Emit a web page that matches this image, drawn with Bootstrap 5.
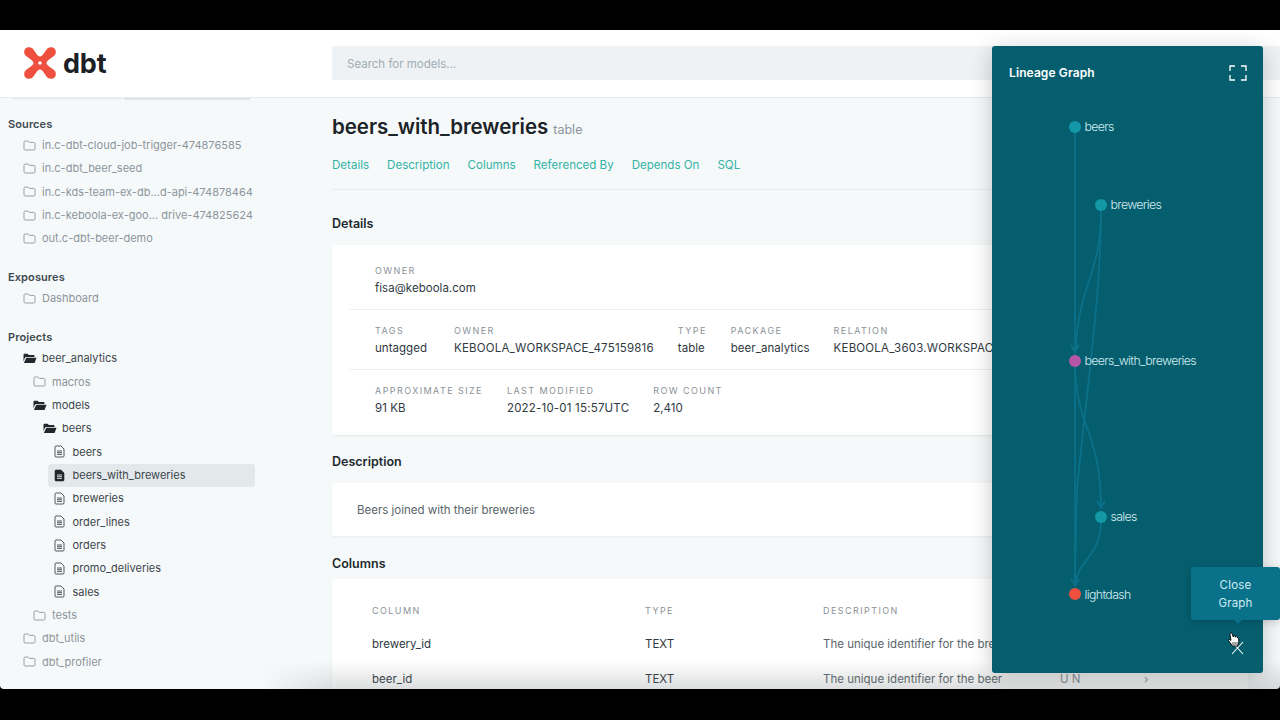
<!DOCTYPE html>
<html lang="en">
<head>
<meta charset="utf-8">
<title>dbt docs</title>
<link href="https://cdn.jsdelivr.net/npm/bootstrap@5.3.0/dist/css/bootstrap.min.css" rel="stylesheet">
<style>
html,body{height:720px;overflow:hidden}
body{background:#000;padding:30px 0 31px;font-family:Inter,"Liberation Sans",sans-serif;font-size:12px;color:#30393f}
.app-frame{position:relative;height:659px;background:#f6f9fa;overflow:hidden;border-bottom-left-radius:4px;border-bottom-right-radius:4px}
.top-bar{height:67.5px;background:#fff;border-bottom:1px solid #e6ebee;padding:0}
.logo-wrap{width:332px;padding-left:24px;gap:7px;height:66px}
.logo-word{font-family:Inter,sans-serif;font-weight:700;font-size:27px;letter-spacing:-.2px;line-height:1;color:#1c2026;margin-top:1px}
.search-box{width:948px;height:34px;margin-top:-1px;background:#eef2f4;border:0;border-radius:3px 0 0 3px;padding:2px 15px 0;font-size:11.5px;color:#30393f}
.search-box::placeholder{color:#a2abb1}
.side-pane{width:332px;padding-top:0;flex:none}
.pill-strip{height:2px;padding-left:12px;gap:2px;margin-bottom:15.5px}
.pill-strip span{display:block;height:2px;background:#eceff1}
.pill-a{width:110px}.pill-b{width:126px;background:#dfe3e6!important}
.tree-head{height:18.6px;line-height:18px;padding-left:8px;font-weight:600;font-size:11px;color:#3f4a51;letter-spacing:.1px}
.tree-sec{margin-bottom:18.1px}
.tree-row{height:23.33px;color:#8c959b;font-size:11px;white-space:nowrap}
.tree-row svg{flex:none;margin-right:6px}
.tree-row svg.wide-ic{margin-right:5px}
.tree-row svg.doc-ic{margin-right:7.5px}
.lv1{padding-left:23px}.lv2{padding-left:33px}.lv3{padding-left:43px}.lv4{padding-left:54px}
.is-open{color:#3d464d}
.is-current{margin-left:48px;width:207px;padding-left:6px;background:#e3e8eb;border-radius:3px;color:#3d464d}
.main-pane{flex:1;padding-right:32px;min-width:0}
.page-title{font-size:20.5px;font-weight:600;color:#1c2328;margin:0;padding-top:16px;line-height:26px;letter-spacing:-.05px}
.page-title small{font-size:12.5px;font-weight:400;color:#8c959b;margin-left:0;letter-spacing:0}
.tab-links{gap:18px;margin-top:13px;padding-bottom:15px;border-bottom:1px solid #e9edef}
.tab-links a{color:#33b3a6;font-size:11.55px;text-decoration:none;line-height:18px}
.sec-title{font-size:12.5px;font-weight:600;color:#22292e;line-height:18px;margin:0 0 12.5px}
.sec-first{margin-top:25px}
.sec-tight{margin-bottom:6px}
.info-card{background:#fff;border:0;border-radius:3px;box-shadow:0 1px 2px rgba(40,60,70,.08)}
.card-gap{margin-bottom:17.5px}
.card-gap-b{margin-bottom:18.5px}
.info-row{margin-left:18px;padding:13px 0 0 25px;border-bottom:1px solid #eceff1;gap:24px;height:60px}
.info-row.edge-row{height:65px}
.info-row.first-row{padding-top:17.5px}
.info-row:last-child{border-bottom:0}
.info-lab{font-size:9px;letter-spacing:1.42px;color:#8a9298;line-height:15px;text-transform:uppercase;white-space:nowrap}
.info-val{font-size:11.5px;color:#30393f;line-height:19px;white-space:nowrap;letter-spacing:.03px;margin-top:1px}
.val-wide{letter-spacing:.2px}
.tag-col{min-width:55px}
.desc-text{padding:17.500px 25px 0;height:53px;font-size:11.5px;line-height:19px;color:#5a646a}
.col-grid{display:grid;grid-template-columns:273px 178px 237px 84px 1fr;padding-left:40px;align-items:center;font-size:11.5px;color:#30393f;white-space:nowrap}
.col-head{height:32px;margin-top:16px;font-size:9px;letter-spacing:1.42px;color:#8a9298}
.col-cell{height:35px;line-height:35px;overflow:hidden}
.col-desc{color:#5a646a}
.col-mark{color:#8c959b}
.lineage{position:absolute;left:992px;top:16px;width:271px;height:627px;background:#055e6e;border-radius:3px;box-shadow:0 4px 22px rgba(0,0,0,.22);color:#fff}
.lineage-title{position:absolute;left:17px;top:18px;font-weight:600;font-size:12px;line-height:18px;letter-spacing:.1px}
.lineage svg{position:absolute;left:0;top:0}
.lineage text{font-family:Inter,sans-serif;font-size:12.3px;font-weight:300;fill:#d3ecf0;letter-spacing:-.62px}
.close-tip{position:absolute;left:1191px;top:537px;width:89px;height:53px;background:#09718a;border-radius:3px;color:#cfeef3;font-size:11.5px;line-height:18px;text-align:center;padding:9px 7px;box-shadow:0 2px 8px rgba(0,0,0,.18);letter-spacing:.2px}
.close-tip::after{content:"";position:absolute;left:43px;bottom:-4px;border-left:4px solid transparent;border-right:4px solid transparent;border-top:4px solid #09718a}
.fade-bottom{position:absolute;left:260px;right:0;bottom:0;height:28px;background:linear-gradient(rgba(120,125,128,0),rgba(120,125,128,.26));-webkit-mask-image:linear-gradient(90deg,transparent,#000 80px);mask-image:linear-gradient(90deg,transparent,#000 80px);pointer-events:none}
.hand-cursor{position:absolute;left:1227px;top:602px}
</style>
</head>
<body>
<svg width="0" height="0" class="d-block" style="position:absolute">
  <symbol id="ic-folder" viewBox="0 0 13 11"><path d="M1 2.200C1 1.500 1.500 1 2.200 1h2.700l1.400 1.400h4.500c.7 0 1.200.5 1.200 1.200v5.200c0 .7-.5 1.200-1.200 1.200H2.200C1.500 10 1 9.500 1 8.800z" fill="none" stroke="currentColor" stroke-width=".9"/></symbol>
  <symbol id="ic-open" viewBox="0 0 14 11"><path d="M.5 2C.5 1.200 1 .700 1.800.700h2.700l1.400 1.400h4.400c.8 0 1.200.5 1.200 1.200V4H3.500C2.600 4 2 4.400 1.700 5.200L.5 8.500z" fill="#20282d"/><path d="M3.300 4.800h10.200L11.600 10H.9z" fill="#20282d"/></symbol>
  <symbol id="ic-doc" viewBox="0 0 11 13"><path d="M1 2c0-.6.400-1 1-1h5l3 3v7c0 .6-.4 1-1 1H2c-.6 0-1-.4-1-1z" fill="none" stroke="currentColor" stroke-width=".9"/><path d="M3 6h5M3 7.700h5M3 9.400h5" stroke="currentColor" stroke-width=".9"/></symbol>
  <symbol id="ic-doc-on" viewBox="0 0 11 13"><path d="M1 2c0-.6.400-1 1-1h5l3 3v7c0 .6-.4 1-1 1H2c-.6 0-1-.4-1-1z" fill="#20282d" stroke="#20282d" stroke-width=".6"/><path d="M3 6h5M3 7.700h5M3 9.400h5" stroke="#e3e8eb" stroke-width=".9"/></symbol>
</svg>

<div class="app-frame">
  <nav class="navbar top-bar align-items-center flex-nowrap">
    <a class="logo-wrap d-flex align-items-center text-decoration-none" href="#">
      <svg width="32" height="32" viewBox="0 0 32 32" aria-hidden="true"><path d="M1.500 1.500C3 0 6-.3 8 1C11 3.500 13 9.500 16 9.500C19 9.500 21 3.500 24 1C26-.3 29 0 30.500 1.500C32 3 32.300 6 31 8C28.500 11 22.500 13 22.500 16C22.500 19 28.500 21 31 24C32.300 26 32 29 30.500 30.500C29 32 26 32.300 24 31C21 28.500 19 22.500 16 22.500C13 22.500 11 28.500 8 31C6 32.300 3 32 1.500 30.500C0 29-.3 26 1 24C3.500 21 9.500 19 9.500 16C9.500 13 3.500 11 1 8C-.3 6 0 3 1.500 1.500Z" fill="#ef4f3e"/><circle cx="16" cy="16" r="1.800" fill="#fff"/></svg>
      <span class="logo-word">dbt</span>
    </a>
    <input class="search-box form-control-plaintext" type="text" placeholder="Search for models...">
  </nav>

  <div class="d-flex">
    <aside class="side-pane">
      <div class="pill-strip d-flex"><span class="pill-a"></span><span class="pill-b"></span></div>

      <div class="tree-sec">
        <div class="tree-head">Sources</div>
        <div class="tree-row lv1 d-flex align-items-center"><svg width="13" height="11"><use href="#ic-folder"/></svg>in.c-dbt-cloud-job-trigger-474876585</div>
        <div class="tree-row lv1 d-flex align-items-center"><svg width="13" height="11"><use href="#ic-folder"/></svg>in.c-dbt_beer_seed</div>
        <div class="tree-row lv1 d-flex align-items-center"><svg width="13" height="11"><use href="#ic-folder"/></svg>in.c-kds-team-ex-db...d-api-474878464</div>
        <div class="tree-row lv1 d-flex align-items-center"><svg width="13" height="11"><use href="#ic-folder"/></svg>in.c-keboola-ex-goo... drive-474825624</div>
        <div class="tree-row lv1 d-flex align-items-center"><svg width="13" height="11"><use href="#ic-folder"/></svg>out.c-dbt-beer-demo</div>
      </div>

      <div class="tree-sec">
        <div class="tree-head">Exposures</div>
        <div class="tree-row lv1 d-flex align-items-center"><svg width="13" height="11"><use href="#ic-folder"/></svg>Dashboard</div>
      </div>

      <div class="tree-sec">
        <div class="tree-head">Projects</div>
        <div class="tree-row lv1 is-open d-flex align-items-center"><svg class="wide-ic" width="14" height="11"><use href="#ic-open"/></svg>beer_analytics</div>
        <div class="tree-row lv2 d-flex align-items-center"><svg width="13" height="11"><use href="#ic-folder"/></svg>macros</div>
        <div class="tree-row lv2 is-open d-flex align-items-center"><svg class="wide-ic" width="14" height="11"><use href="#ic-open"/></svg>models</div>
        <div class="tree-row lv3 is-open d-flex align-items-center"><svg class="wide-ic" width="14" height="11"><use href="#ic-open"/></svg>beers</div>
        <div class="tree-row lv4 is-open d-flex align-items-center"><svg class="doc-ic" width="11" height="13"><use href="#ic-doc"/></svg>beers</div>
        <div class="tree-row is-current d-flex align-items-center"><svg class="doc-ic" width="11" height="13"><use href="#ic-doc-on"/></svg>beers_with_breweries</div>
        <div class="tree-row lv4 is-open d-flex align-items-center"><svg class="doc-ic" width="11" height="13"><use href="#ic-doc"/></svg>breweries</div>
        <div class="tree-row lv4 is-open d-flex align-items-center"><svg class="doc-ic" width="11" height="13"><use href="#ic-doc"/></svg>order_lines</div>
        <div class="tree-row lv4 is-open d-flex align-items-center"><svg class="doc-ic" width="11" height="13"><use href="#ic-doc"/></svg>orders</div>
        <div class="tree-row lv4 is-open d-flex align-items-center"><svg class="doc-ic" width="11" height="13"><use href="#ic-doc"/></svg>promo_deliveries</div>
        <div class="tree-row lv4 is-open d-flex align-items-center"><svg class="doc-ic" width="11" height="13"><use href="#ic-doc"/></svg>sales</div>
        <div class="tree-row lv2 d-flex align-items-center"><svg width="13" height="11"><use href="#ic-folder"/></svg>tests</div>
        <div class="tree-row lv1 d-flex align-items-center"><svg width="13" height="11"><use href="#ic-folder"/></svg>dbt_utils</div>
        <div class="tree-row lv1 d-flex align-items-center"><svg width="13" height="11"><use href="#ic-folder"/></svg>dbt_profiler</div>
      </div>
    </aside>

    <main class="main-pane">
      <h1 class="page-title">beers_with_breweries <small>table</small></h1>
      <nav class="nav tab-links">
        <a href="#">Details</a><a href="#">Description</a><a href="#">Columns</a><a href="#">Referenced By</a><a href="#">Depends On</a><a href="#">SQL</a>
      </nav>

      <h2 class="sec-title sec-first">Details</h2>
      <div class="card info-card card-gap">
        <div class="info-row edge-row first-row d-flex"><div><div class="info-lab">Owner</div><div class="info-val">fisa@keboola.com</div></div></div>
        <div class="info-row d-flex"><div class="tag-col"><div class="info-lab">Tags</div><div class="info-val">untagged</div></div><div><div class="info-lab">Owner</div><div class="info-val val-wide">KEBOOLA_WORKSPACE_475159816</div></div><div><div class="info-lab">Type</div><div class="info-val">table</div></div><div><div class="info-lab">Package</div><div class="info-val">beer_analytics</div></div><div><div class="info-lab">Relation</div><div class="info-val val-wide">KEBOOLA_3603.WORKSPACE_475159816</div></div></div>
        <div class="info-row edge-row d-flex"><div><div class="info-lab">Approximate Size</div><div class="info-val">91 KB</div></div><div><div class="info-lab">Last Modified</div><div class="info-val val-wide">2022-10-01 15:57UTC</div></div><div><div class="info-lab">Row Count</div><div class="info-val">2,410</div></div></div>
      </div>

      <h2 class="sec-title">Description</h2>
      <div class="card info-card card-gap-b"><div class="desc-text">Beers joined with their breweries</div></div>

      <h2 class="sec-title sec-tight">Columns</h2>
      <div class="card info-card">
        <div class="col-grid col-head"><div>COLUMN</div><div>TYPE</div><div>DESCRIPTION</div><div></div><div></div></div>
        <div class="col-grid"><div class="col-cell">brewery_id</div><div class="col-cell">TEXT</div><div class="col-cell col-desc">The unique identifier for the brewery</div><div class="col-cell col-mark">U N</div><div class="col-cell col-mark">›</div></div>
        <div class="col-grid"><div class="col-cell">beer_id</div><div class="col-cell">TEXT</div><div class="col-cell col-desc">The unique identifier for the beer</div><div class="col-cell col-mark">U N</div><div class="col-cell col-mark">›</div></div>
      </div>
    </main>
  </div>

  <div class="fade-bottom"></div>

  <section class="lineage">
    <div class="lineage-title">Lineage Graph</div>
    <svg width="271" height="627" viewBox="992 46 271 627" role="img" aria-label="Lineage graph">
      <g fill="none" stroke="#0b7189" stroke-width="1.800">
        <path d="M1075 133V586"/>
        <path d="M1101 211C1101 275 1078 285 1076 350"/>
        <path d="M1101 211C1101 300 1085 400 1077 490C1076 530 1075 560 1075 586"/>
        <path d="M1075 367C1077 430 1100 430 1101 506"/>
        <path d="M1101 523C1100 558 1078 558 1075 586"/>
        <path d="M1071 345L1075 352L1079 345M1097 501L1101 508L1105 501M1071 579L1075 586L1079 579"/>
      </g>
      <g>
        <circle cx="1075" cy="127" r="6" fill="#1497a6"/>
        <circle cx="1101" cy="205" r="6" fill="#1497a6"/>
        <circle cx="1075" cy="361" r="6" fill="#b556a9"/>
        <circle cx="1101" cy="517" r="6" fill="#1497a6"/>
        <circle cx="1075" cy="594" r="6" fill="#ef4f3e"/>
      </g>
      <text x="1084.500" y="131">beers</text>
      <text x="1110.500" y="209">breweries</text>
      <text x="1084.500" y="365">beers_with_breweries</text>
      <text x="1110.500" y="521">sales</text>
      <text x="1084.500" y="598.500">lightdash</text>
      <path d="M1230 71V66H1235M1241 66H1246V71M1246 75V80H1241M1235 80H1230V75" fill="none" stroke="#fff" stroke-width="1.300"/>
      <path d="M1232 642L1243 654M1243 642L1232 654" fill="none" stroke="#fff" stroke-width="1.100"/>
    </svg>
  </section>

  <div class="close-tip">Close<br>Graph</div>

  <svg class="hand-cursor" width="13" height="16" viewBox="0 0 13 16" aria-hidden="true"><path d="M3.500 1.200c.8-.4 1.500 0 1.800.8l1 3 .2-1.300c.5-.5 1.200-.4 1.500.2l.4 1.300.3-.7c.5-.4 1.100-.3 1.400.3l.4 1.100c.5-.3 1 0 1.100.6l.2 3.600c0 1.600-.8 3-1.400 3.900H5.500L1.700 8.800c-.5-.7-.2-1.400.6-1.400l1.700 1L3 2.500c-.1-.5 0-1 .5-1.300z" fill="#fff" stroke="#000" stroke-width=".9" stroke-linejoin="round"/><path d="M6 10v3M8 10v3M10 10v3" stroke="#000" stroke-width=".7"/></svg>
</div>
</body>
</html>
